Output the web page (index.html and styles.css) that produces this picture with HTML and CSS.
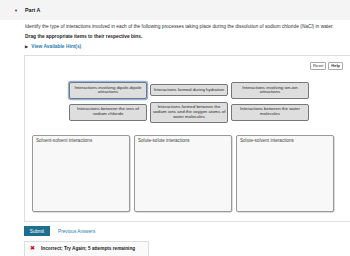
FILE: index.html
```html
<!DOCTYPE html>
<html lang="en">
<head>
<meta charset="UTF-8">
<meta name="viewport" content="width=device-width, initial-scale=1.0">
<title>Part A</title>
<link rel="stylesheet" href="styles.css">
</head>
<body>
  <div class="part-header">
    <span class="caret">&#9660;</span>
    <span class="part-title">Part A</span>
  </div>
  <div class="content">
    <p class="question">Identify the type of interactions involved in each of the following processes taking place during the dissolution of sodium chloride (<i>NaCl</i>) in water.</p>
    <p class="instruction">Drag the appropriate items to their respective bins.</p>
    <p class="hint"><span class="hint-caret">&#9654;</span> View Available Hint(s)</p>

    <div class="dnd-box">
      <div class="toolbar">
        <button class="tool-btn">Reset</button>
        <button class="tool-btn bold">Help</button>
      </div>
      <div class="items">
        <div class="item selected">Interactions involving dipole-dipole attractions</div>
        <div class="item">Interactions formed during hydration</div>
        <div class="item">Interactions involving ion-ion attractions</div>
        <div class="item">Interactions between the ions of sodium chloride</div>
        <div class="item">Interactions formed between the sodium ions and the oxygen atoms of water molecules</div>
        <div class="item">Interactions between the water molecules</div>
      </div>
      <div class="bins">
        <div class="bin">Solvent-solvent interactions</div>
        <div class="bin">Solute-solute interactions</div>
        <div class="bin">Solute-solvent interactions</div>
      </div>
    </div>

    <div class="actions">
      <button class="submit">Submit</button>
      <a class="prev-link" href="#">Previous Answers</a>
    </div>

    <div class="feedback">
      <span class="cross">&#10006;</span>
      <span class="feedback-text">Incorrect; Try Again; 5 attempts remaining</span>
    </div>
  </div>
</body>
</html>
```

FILE: styles.css
```css
body {
  font-family: "Liberation Sans", Arial, sans-serif;
  color: #333;
  margin: 0;
  padding: 0;
  overflow: hidden;
  background-color: #fff;
}
.part-header {
  height: 20px;
  background-color: #f4f4f4;
  display: flex;
  align-items: center;
  padding-left: 14px;
}
.caret {
  font-size: 4px;
  color: #333;
  width: 11px;
}
.part-title {
  font-size: 5.3px;
  font-weight: bold;
  color: #222;
}
.content {
  padding-left: 24px;
}
.question,
.instruction,
.hint {
  margin: 0;
  padding-left: 1px;
  font-size: 4.85px;
  line-height: 10px;
}
.question {
  margin-top: 2px;
  color: #333;
}
.instruction {
  font-weight: bold;
  color: #222;
}
.hint {
  font-weight: bold;
  color: #2b7bb0;
  margin-bottom: 3px;
}
.hint-caret {
  font-size: 3.5px;
  color: #333;
  margin-right: 2px;
}
.dnd-box {
  width: 330px;
  height: 167px;
  box-sizing: border-box;
  border: 1px solid #ddd;
  padding-top: 6px;
}
.toolbar {
  display: flex;
  justify-content: flex-end;
  gap: 2px;
  padding-right: 10px;
}
.tool-btn {
  font-family: inherit;
  font-size: 4px;
  color: #333;
  background-color: #fff;
  border: 1px solid #aaa;
  border-radius: 1px;
  height: 8px;
  padding: 0 2px;
  line-height: 6px;
}
.tool-btn.bold {
  font-weight: bold;
}
.items {
  display: flex;
  flex-wrap: wrap;
  justify-content: center;
  align-items: center;
  gap: 3px 3px;
  width: 240px;
  margin: 12px auto 0;
}
.item {
  width: 78px;
  box-sizing: border-box;
  background-color: #dedede;
  border: 1px solid #777;
  border-radius: 2px;
  padding: 2.5px 1px;
  font-size: 4.4px;
  line-height: 4.8px;
  text-align: center;
  color: #2a2a2a;
}
.item.selected {
  box-shadow: 0 0 0 1.2px #8fb6e3;
}
.bins {
  display: flex;
  gap: 4px;
  margin: 12px 0 0 7px;
}
.bin {
  width: 98px;
  height: 77px;
  box-sizing: border-box;
  background-color: #f8f8f8;
  border: 1px solid #999;
  border-radius: 2px;
  box-shadow: 0.5px 0.5px 0 #bbb;
  padding: 2px 3px;
  font-size: 4.6px;
  line-height: 6px;
  color: #444;
}
.actions {
  display: flex;
  align-items: center;
  gap: 8px;
  margin-top: 4px;
}
.submit {
  font-family: inherit;
  font-size: 4.6px;
  color: #fff;
  background-color: #1e6f8f;
  border: none;
  width: 26px;
  height: 10px;
  padding: 0;
}
.prev-link {
  font-size: 4.7px;
  color: #2b7bb0;
  text-decoration: none;
}
.feedback {
  display: flex;
  align-items: center;
  width: 125px;
  height: 18px;
  box-sizing: border-box;
  margin-top: 5px;
  border: 1px solid #ddd;
  background-color: #fafafa;
  padding: 0 0 4px 5px;
}
.cross {
  color: #d0021b;
  font-size: 5.5px;
  width: 11px;
}
.feedback-text {
  font-size: 4.7px;
  font-weight: bold;
  color: #222;
}
```
